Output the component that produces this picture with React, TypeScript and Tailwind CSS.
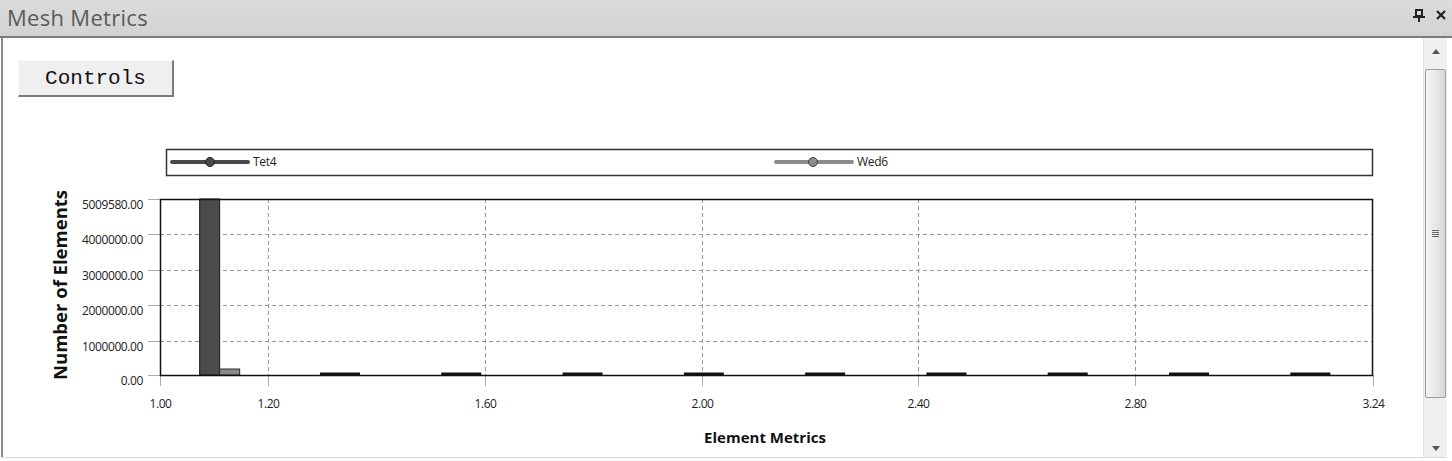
import React from 'react';

const X0 = 160;
const X1 = 1373;
const Y0 = 199;
const Y1 = 375;
const xOf = (v: number) => X0 + ((v - 1) / 2.24) * (X1 - X0);

const X_TICKS = ['1.00', '1.20', '1.60', '2.00', '2.40', '2.80', '3.24'];
const Y_TICKS = [
  { label: '5009580.00', y: 199 },
  { label: '4000000.00', y: 234 },
  { label: '3000000.00', y: 270 },
  { label: '2000000.00', y: 305 },
  { label: '1000000.00', y: 341 },
  { label: '0.00', y: 375 },
];

const chartFont = '"Open Sans", "Noto Sans", sans-serif';

const Chart: React.FC = () => {
  const binW = (X1 - X0) / 10;
  return (
    <svg width={1420} height={317} viewBox="3 140 1420 317" className="block">
      {/* Legend */}
      <rect x={166.5} y={149.5} width={1206} height={26} fill="white" stroke="#333" strokeWidth={1.5} />
      <line x1={172} y1={162} x2={248} y2={162} stroke="#4a4a4a" strokeWidth={4} strokeLinecap="round" />
      <circle cx={210} cy={162} r={4.5} fill="#4a4a4a" stroke="#222" strokeWidth={1} />
      <text x={253} y={166} fontSize={12} fill="#222" fontFamily={chartFont} letterSpacing={-0.3}>Tet4</text>
      <line x1={776} y1={162} x2={852} y2={162} stroke="#8c8c8c" strokeWidth={4} strokeLinecap="round" />
      <circle cx={813} cy={162} r={4.5} fill="#8c8c8c" stroke="#444" strokeWidth={1} />
      <text x={857} y={166} fontSize={12} fill="#222" fontFamily={chartFont} letterSpacing={-0.3}>Wed6</text>

      {/* horizontal grid + y ticks */}
      {Y_TICKS.map((t) => (
        <g key={t.label}>
          <line x1={148} y1={t.y + 0.5} x2={X0} y2={t.y + 0.5} stroke="#aaa" strokeWidth={1} />
          {t.y !== Y0 && t.y !== Y1 && (
            <line x1={X0} y1={t.y + 0.5} x2={X1} y2={t.y + 0.5} stroke="#999" strokeWidth={1} strokeDasharray="4 3" />
          )}
          <text x={143} y={t.y + 10} fontSize={12} textAnchor="end" fill="#222" fontFamily={chartFont} letterSpacing={-0.4}>
            {t.label}
          </text>
        </g>
      ))}

      {/* vertical grid + x ticks */}
      {X_TICKS.map((l) => {
        const x = Math.round(xOf(parseFloat(l))) + 0.5;
        const inner = l !== '1.00' && l !== '3.24';
        return (
          <g key={l}>
            {inner && <line x1={x} y1={Y0} x2={x} y2={Y1} stroke="#999" strokeWidth={1} strokeDasharray="4 3" />}
            <line x1={x} y1={Y1} x2={x} y2={386} stroke="#aaa" strokeWidth={1} />
            <text x={x} y={408} fontSize={12} textAnchor="middle" fill="#222" fontFamily={chartFont} letterSpacing={-0.4}>
              {l}
            </text>
          </g>
        );
      })}

      {/* bars */}
      {Array.from({ length: 10 }).map((_, i) => {
        const c = X0 + (i + 0.5) * binW - 1;
        if (i === 0) {
          return (
            <g key={i}>
              <rect x={c - 20} y={Y0} width={20} height={Y1 - Y0} fill="#4b4b4b" stroke="#1a1a1a" strokeWidth={1} />
              <rect x={c} y={369} width={20} height={6} fill="#8a8a8a" stroke="#2a2a2a" strokeWidth={1} />
            </g>
          );
        }
        return <rect key={i} x={c - 21} y={372.5} width={40} height={2.5} fill="#111" />;
      })}

      {/* plot frame */}
      <rect x={X0 + 0.5} y={Y0 + 0.5} width={X1 - X0 - 1} height={Y1 - Y0} fill="none" stroke="#111" strokeWidth={1.5} />

      {/* axis titles */}
      <text
        x={0}
        y={0}
        transform="translate(67 285) rotate(-90)"
        fontSize={18.5}
        fontWeight={700}
        textAnchor="middle"
        fill="#111"
        fontFamily={chartFont}
      >
        Number of Elements
      </text>
      <text x={765} y={443} fontSize={15} fontWeight={700} textAnchor="middle" fill="#111" fontFamily={chartFont}>
        Element Metrics
      </text>
    </svg>
  );
};

const Scrollbar: React.FC = () => (
  <div className="w-[24px] bg-[#f0f0f0] border-l border-[#e4e4e4] flex flex-col items-center">
    <div className="h-[31px] w-full flex items-start justify-center pt-[11px]">
      <svg width="8" height="5" viewBox="0 0 8 5">
        <path d="M0 5 L4 0 L8 5 Z" fill="#555" />
      </svg>
    </div>
    <div className="w-[21px] h-[329px] rounded-[2px] border border-[#9c9c9c] bg-gradient-to-r from-[#f6f6f6] via-[#e8e8e8] to-[#d8d8d8] flex items-center justify-center">
      <div className="flex flex-col gap-[1px]">
        <div className="w-[7px] h-[1px] bg-[#666]" />
        <div className="w-[7px] h-[1px] bg-[#666]" />
        <div className="w-[7px] h-[1px] bg-[#666]" />
        <div className="w-[7px] h-[1px] bg-[#666]" />
      </div>
    </div>
    <div className="flex-1 w-full flex items-end justify-center pb-[6px]">
      <svg width="8" height="5" viewBox="0 0 8 5">
        <path d="M0 0 L8 0 L4 5 Z" fill="#555" />
      </svg>
    </div>
  </div>
);

const App: React.FC = () => {
  return (
    <div className="w-[1452px] h-[461px] bg-white overflow-hidden flex flex-col">
      {/* Title bar */}
      <div className="h-[38px] shrink-0 bg-gradient-to-b from-[#dcdcdc] to-[#d2d2d2] border-b-2 border-[#7c7c7c] flex items-center justify-between pl-[7px] pr-[6px]">
        <span className="text-[22px] text-[#5a5a5a] leading-none pb-[2px] tracking-[0.3px]" style={{ fontFamily: '"Open Sans", "Noto Sans", sans-serif' }}>
          Mesh Metrics
        </span>
        <div className="flex items-center gap-[11px] pb-[6px]">
          <svg width="12" height="13" viewBox="0 0 12 13">
            <rect x="3" y="1" width="6" height="6" fill="none" stroke="#222" strokeWidth="2" />
            <line x1="0" y1="8" x2="12" y2="8" stroke="#222" strokeWidth="2" />
            <line x1="6" y1="8" x2="6" y2="13" stroke="#222" strokeWidth="2" />
          </svg>
          <svg width="10" height="10" viewBox="0 0 10 10">
            <path d="M1 1 L9 9 M9 1 L1 9" stroke="#222" strokeWidth="2.2" />
          </svg>
        </div>
      </div>

      {/* Body */}
      <div className="flex-1 flex min-h-0 ml-[1px] mr-[5px] mb-[3px] border-b border-[#dcdcdc]">
        <div className="flex-1 border-l-2 border-[#8c8c8c] flex flex-col">
          <div className="pt-[22px] pl-[15px]">
            <button className="w-[156px] h-[37px] bg-[#efefef] border-t border-l border-[#f8f8f8] border-r-2 border-b-2 border-r-[#7a7a7a] border-b-[#7a7a7a] text-[21px] text-[#111] leading-none pt-[1px]" style={{ fontFamily: '"Liberation Mono", monospace' }}>
              Controls
            </button>
          </div>
          <div className="mt-[43px]">
            <Chart />
          </div>
        </div>
        <Scrollbar />
      </div>
    </div>
  );
};

export default App;
